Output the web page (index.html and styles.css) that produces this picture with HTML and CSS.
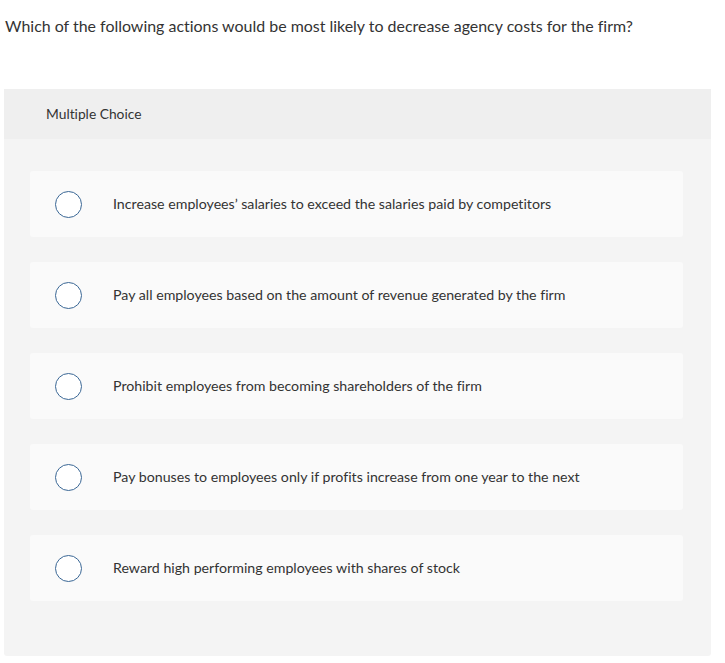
FILE: index.html
```html
<!DOCTYPE html>
<html>
<head>
<meta charset="utf-8">
<link rel="stylesheet" href="styles.css">
</head>
<body>
<p class="question">Which of the following actions would be most likely to decrease agency costs for the firm?</p>
<div class="panel">
  <div class="panel-head">Multiple Choice</div>
  <div class="panel-body">
    <div class="option"><span class="radio"></span><span class="label">Increase employees’ salaries to exceed the salaries paid by competitors</span></div>
    <div class="option"><span class="radio"></span><span class="label">Pay all employees based on the amount of revenue generated by the firm</span></div>
    <div class="option"><span class="radio"></span><span class="label">Prohibit employees from becoming shareholders of the firm</span></div>
    <div class="option"><span class="radio"></span><span class="label">Pay bonuses to employees only if profits increase from one year to the next</span></div>
    <div class="option"><span class="radio"></span><span class="label">Reward high performing employees with shares of stock</span></div>
  </div>
</div>
</body>
</html>
```
FILE: styles.css
```css
html, body {
  margin: 0;
  padding: 0;
  background: #ffffff;
}
body {
  font-family: Lato, "Liberation Sans", sans-serif;
  font-variant-ligatures: none;
  color: #333333;
  padding: 0 14px 0 4px;
}
.question {
  margin: 0;
  padding: 16px 0 0 1px;
  height: 89px;
  box-sizing: border-box;
  font-size: 15.95px;
  line-height: 20px;
}
.panel {
  width: 707px;
  border-radius: 0 0 3px 3px;
  overflow: hidden;
}
.panel-head {
  background: #efefef;
  height: 50px;
  box-sizing: border-box;
  padding: 16px 0 0 42px;
  font-size: 13.8px;
  line-height: 18px;
}
.panel-body {
  background: #f4f4f4;
  padding: 32px 28px 55px 26px;
  display: flex;
  flex-direction: column;
  gap: 25px;
}
.option {
  background: #fafafa;
  height: 66px;
  border-radius: 3px;
  display: flex;
  align-items: center;
}
.radio {
  width: 25px;
  height: 25px;
  border: 1.5px solid #3a6795;
  border-radius: 50%;
  background: #fff;
  margin-left: 25px;
  flex: none;
}
.label {
  margin-left: 31px;
  font-size: 14.2px;
  line-height: 18px;
}
```
